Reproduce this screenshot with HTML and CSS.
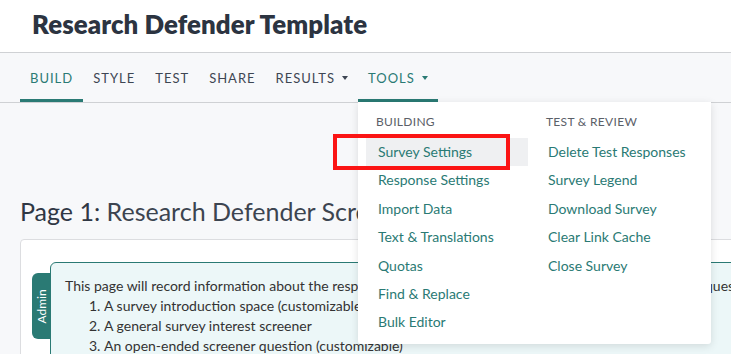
FILE: index.html
```html
<!DOCTYPE html>
<html lang="en">
<head>
<meta charset="utf-8">
<title>Research Defender Template</title>
<link rel="stylesheet" href="styles.css">
</head>
<body>
<header class="top">
  <h1 class="title">Research Defender Template</h1>
</header>
<nav class="tabs">
  <ul class="tab-list">
    <li class="tab active">BUILD</li>
    <li class="tab">STYLE</li>
    <li class="tab">TEST</li>
    <li class="tab">SHARE</li>
    <li class="tab">RESULTS <span class="caret"></span></li>
    <li class="tab active open">TOOLS <span class="caret"></span>
      <div class="dropdown">
        <div class="dd-col">
          <div class="dd-head">BUILDING</div>
          <div class="dd-item hover highlighted">Survey Settings</div>
          <div class="dd-item">Response Settings</div>
          <div class="dd-item">Import Data</div>
          <div class="dd-item">Text &amp; Translations</div>
          <div class="dd-item">Quotas</div>
          <div class="dd-item">Find &amp; Replace</div>
          <div class="dd-item">Bulk Editor</div>
        </div>
        <div class="dd-col">
          <div class="dd-head">TEST &amp; REVIEW</div>
          <div class="dd-item">Delete Test Responses</div>
          <div class="dd-item">Survey Legend</div>
          <div class="dd-item">Download Survey</div>
          <div class="dd-item">Clear Link Cache</div>
          <div class="dd-item">Close Survey</div>
        </div>
      </div>
    </li>
  </ul>
</nav>
<main class="page">
  <h2 class="page-title"><span class="page-num">Page 1:</span> Research Defender Screener</h2>
  <section class="card">
    <div class="question">
      <div class="admin-tab"><span class="admin-label">Admin</span></div>
      <div class="q-box">
        <p class="q-text">This page will record information about the respondent and includes the following screening component questions:</p>
        <ol class="q-list">
          <li>A survey introduction space (customizable)</li>
          <li>A general survey interest screener</li>
          <li>An open-ended screener question (customizable)</li>
        </ol>
      </div>
    </div>
  </section>
</main>
</body>
</html>
```
FILE: styles.css
```css
html, body {
  margin: 0;
  padding: 0;
}
body {
  background: #f7f8fa;
  font-family: Lato, "Open Sans", "Liberation Sans", sans-serif;
  color: #333;
  overflow: hidden;
  width: 731px;
  height: 354px;
}
.top {
  background: #fff;
  height: 52px;
  border-bottom: 1px solid #cfd1d4;
  display: flex;
  align-items: center;
  padding-left: 32px;
}
.title {
  margin: 0;
  font-size: 25.8px;
  font-weight: 800;
  color: #2c3441;
  letter-spacing: 0.1px;
  line-height: 30px;
  padding-bottom: 4px;
}
.tabs {
  background: #f7f8fa;
  border-bottom: 1px solid #cfd1d4;
  height: 49px;
}
.tab-list {
  list-style: none;
  margin: 0;
  padding: 0 0 0 20px;
  display: flex;
  height: 49px;
}
.tab {
  position: relative;
  display: flex;
  align-items: center;
  gap: 7px;
  padding: 3px 10px 0 10px;
  font-size: 13px;
  letter-spacing: 1px;
  color: #3e4653;
  border-bottom: 3px solid transparent;
}
.tab.active {
  color: #2a7a74;
  border-bottom-color: #2a7a74;
}
.caret {
  width: 0;
  height: 0;
  border-left: 3.5px solid transparent;
  border-right: 3.5px solid transparent;
  border-top: 4px solid currentColor;
  margin-top: 1px;
}
.dropdown {
  position: absolute;
  top: calc(100% + 3px);
  left: 0;
  width: 353px;
  box-sizing: border-box;
  background: #fff;
  box-shadow: 0 2px 8px rgba(0, 0, 0, 0.12);
  border-radius: 0 0 3px 3px;
  display: grid;
  grid-template-columns: 162px 1fr;
  column-gap: 8px;
  padding: 10px 8px 7px 8px;
  z-index: 10;
  letter-spacing: 0;
}
.dd-head {
  font-size: 12px;
  line-height: 20px;
  color: #5b6068;
  padding-left: 10px;
  margin-bottom: 6px;
  letter-spacing: 0.3px;
}
.dd-item {
  position: relative;
  font-size: 14px;
  line-height: 28.4px;
  color: #2a7a74;
  padding-left: 12px;
  white-space: nowrap;
}
.dd-item.hover {
  background: #eff0f2;
}
.dd-item.highlighted::after {
  content: "";
  position: absolute;
  left: -33px;
  right: 18px;
  top: -4px;
  bottom: -4px;
  border: 4px solid #fb1414;
}
.page {
  padding: 0 0 0 20px;
}
.page-title {
  margin: 92px 0 12px 0;
  font-size: 25px;
  line-height: 32px;
  font-weight: 400;
  color: #3c4450;
  white-space: nowrap;
}
.page-num {
  color: #2f3744;
}
.card {
  background: #fff;
  border: 1px solid #dcdde0;
  border-radius: 4px;
  width: 1000px;
  padding: 22px 0 0 11px;
}
.question {
  display: flex;
  align-items: flex-start;
}
.admin-tab {
  margin-top: 11px;
  width: 18px;
  height: 66px;
  background: #2a7a74;
  border-radius: 6px 0 0 6px;
  display: flex;
  align-items: center;
  justify-content: center;
}
.admin-label {
  transform: rotate(-90deg);
  color: #fff;
  font-size: 12px;
  white-space: nowrap;
}
.q-box {
  flex: 1;
  background: #ecf7f8;
  border: 1px solid #2a7a74;
  border-radius: 6px 0 0 0;
  padding: 13px 14px 20px 14px;
  font-size: 14px;
  line-height: 20px;
  color: #333;
}
.q-text {
  margin: 0;
  white-space: nowrap;
}
.q-list {
  margin: 0;
  padding-left: 39px;
}
.q-list li {
  white-space: nowrap;
}
```
